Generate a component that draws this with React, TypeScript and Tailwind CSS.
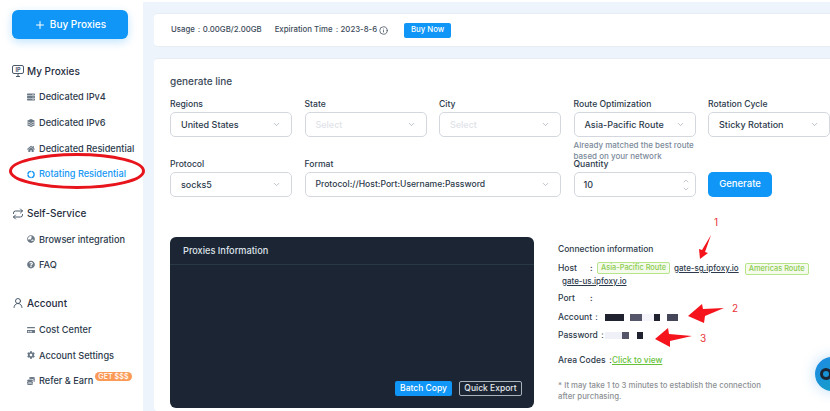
import { ChevronDown, ChevronUp, Plus, Info, Repeat, UserRound } from "lucide-react";
import { FaServer, FaLayerGroup, FaHome, FaGlobeAsia, FaQuestionCircle, FaCreditCard, FaCog, FaCoins } from "react-icons/fa";
import type { ReactNode } from "react";

const FONT = "font-['Inter','Liberation_Sans',sans-serif]";

function IpIcon() {
  return (
    <svg width="12" height="12" viewBox="0 0 12 12" fill="none" stroke="currentColor" strokeWidth="1">
      <rect x="0.5" y="0.5" width="11" height="8" rx="1.5" />
      <path d="M4 11.5h4M6 8.5v3" />
      <text x="6" y="6.6" textAnchor="middle" fontSize="5.5" fontWeight="700" fill="currentColor" stroke="none">IP</text>
    </svg>
  );
}

function RingIcon() {
  return (
    <svg width="9" height="9" viewBox="0 0 9 9" fill="none" stroke="currentColor" strokeWidth="1.5">
      <circle cx="4.5" cy="4.5" r="3.5" strokeDasharray="5 0.6" />
    </svg>
  );
}

function NavHead({ icon, label }: { icon: ReactNode; label: string }) {
  return (
    <div className="flex items-center gap-[3px] h-[14px] pl-[12px] text-[10px] font-medium text-[#1f2d3d]">
      <span className="w-[12px] flex justify-center text-[#4b5a6b]">{icon}</span>
      {label}
    </div>
  );
}

function NavItem({ icon, label, active, badge }: { icon: ReactNode; label: string; active?: boolean; badge?: boolean }) {
  return (
    <div className={`flex items-center gap-[4px] h-[14px] pt-[1px] pl-[27px] text-[9.2px] font-medium whitespace-nowrap ${active ? "text-[#1296f5]" : "text-[#2c3a4b]"}`}>
      <span className={`w-[8px] flex justify-center ${active ? "text-[#1296f5]" : "text-[#6b7886]"}`}>{icon}</span>
      {label}
      {badge && (
        <span className="-mt-[9px] -ml-[2px] h-[9px] px-[3px] rounded-full bg-[#fb9a57] text-white text-[7.2px] leading-[9px]">GET $$$</span>
      )}
    </div>
  );
}

function Field({ label, value, placeholder, wide, children }: { label: string; value?: string; placeholder?: boolean; wide?: boolean; children?: ReactNode }) {
  return (
    <div className={wide ? "col-span-2" : ""}>
      <div className="h-[12px] leading-[12px] text-[8.6px] font-medium text-[#2c3a4b]">{label}</div>
      {children ?? (
        <div className="mt-[2px] h-[25px] flex items-center justify-between pl-[10px] pr-[10px] bg-white border border-[#d4d8de] rounded-[5px]">
          <span className={`${wide ? "text-[8.6px]" : "text-[9px]"} font-medium whitespace-nowrap ${placeholder ? "text-[#dfe3e8]" : "text-[#2c3a4b]"}`}>{value}</span>
          <ChevronDown size={9} className="text-[#a8afb8]" />
        </div>
      )}
    </div>
  );
}

function Tag({ children }: { children: ReactNode }) {
  return (
    <span className="inline-block h-[12px] leading-[10px] px-[3px] border border-[#b7e58c] bg-[#f4fbec] rounded-[2px] text-[7.4px] font-medium text-[#8ccb50] whitespace-nowrap">{children}</span>
  );
}

function Redacted({ bars }: { bars: [number, string][] }) {
  return (
    <span className="flex items-center h-[7px] blur-[0.6px]">
      {bars.map(([w, c], i) => (
        <span key={i} className="h-full" style={{ width: w, background: c }} />
      ))}
    </span>
  );
}

export default function App() {
  return (
    <div className={`relative flex w-[830px] h-[411px] overflow-hidden bg-[#edf4fb] ${FONT}`}>
      {/* Sidebar */}
      <aside className="w-[143px] shrink-0 bg-white pt-[10px]">
        <div className="ml-[12px] mr-[15px] h-[29px] flex items-center justify-center gap-[4px] rounded-[6px] bg-[#0f96f6] text-white text-[10px] font-medium shadow-[0_3px_8px_rgba(15,150,246,0.25)]">
          <Plus size={12} />
          Buy Proxies
        </div>
        <div className="mt-[25px] flex flex-col gap-[11.7px]">
          <NavHead icon={<IpIcon />} label="My Proxies" />
          <NavItem icon={<FaServer size={8} />} label="Dedicated IPv4" />
          <NavItem icon={<FaLayerGroup size={8} />} label="Dedicated IPv6" />
          <NavItem icon={<FaHome size={8} />} label="Dedicated Residential" />
          <NavItem icon={<RingIcon />} label="Rotating Residential" active />
        </div>
        <div className="mt-[26px] flex flex-col gap-[11.2px]">
          <NavHead icon={<Repeat size={12} />} label="Self-Service" />
          <NavItem icon={<FaGlobeAsia size={8} />} label="Browser integration" />
          <NavItem icon={<FaQuestionCircle size={9} />} label="FAQ" />
        </div>
        <div className="mt-[25px] flex flex-col gap-[11.9px]">
          <NavHead icon={<UserRound size={12} />} label="Account" />
          <NavItem icon={<FaCreditCard size={8} />} label="Cost Center" />
          <NavItem icon={<FaCog size={8} />} label="Account Settings" />
          <NavItem icon={<FaCoins size={8} />} label="Refer & Earn" badge />
        </div>
      </aside>

      {/* Main */}
      <main className="flex-1 min-w-0 pl-[11px] pt-[11px] border-t-2 border-white flex flex-col gap-[11px]">
        <div className="h-[34px] shrink-0 flex items-center pl-[17px] bg-white rounded-l-[4px] border-y border-[#e6edf4] text-[7.8px] font-medium text-[#3c4a5a] whitespace-nowrap">
          <span>Usage：0.00GB/2.00GB</span>
          <span className="ml-[13px]">Expiration Time：2023-8-6</span>
          <Info size={9} className="ml-[2px]" />
          <span className="ml-[16px] w-[47px] h-[15px] flex items-center justify-center rounded-[2px] bg-[#0f96f6] text-white">Buy Now</span>
        </div>

        <div className="flex-1 pl-[16px] pt-[16px] bg-white rounded-l-[4px] border-t border-[#e6edf4]">
          <div className="h-[12px] leading-[12px] text-[10px] font-medium text-[#3c4a5a]">generate line</div>

          <div className="mt-[11px] grid grid-cols-[122px_122px_122px_122px_122px] gap-x-[12.5px] gap-y-[21px] w-[700px]">
            <Field label="Regions" value="United States" />
            <Field label="State" value="Select" placeholder />
            <Field label="City" value="Select" placeholder />
            <div className="relative">
              <Field label="Route Optimization" value="Asia-Pacific Route" />
              <div className="absolute left-0 top-[42px] text-[8px] leading-[10.5px] font-medium text-[#7b8a9a] whitespace-nowrap">
                Already matched the best route<br />based on your network
              </div>
            </div>
            <Field label="Rotation Cycle" value="Sticky Rotation" />

            <Field label="Protocol" value="socks5" />
            <Field label="Format" value="Protocol://Host:Port:Username:Password" wide />
            <Field label="Quantity">
              <div className="mt-[2px] h-[25px] flex items-center justify-between pl-[9px] pr-[5px] border border-[#d4d8de] rounded-[5px]">
                <span className="text-[9px] font-medium text-[#2c3a4b]">10</span>
                <span className="flex flex-col text-[#a8afb8]">
                  <ChevronUp size={8} />
                  <ChevronDown size={8} />
                </span>
              </div>
            </Field>
            <div className="pt-[14px]">
              <div className="w-[64px] h-[25px] flex items-center justify-center rounded-[5px] bg-[#0f96f6] text-white text-[9.5px] font-medium">Generate</div>
            </div>
          </div>

          <div className="mt-[40px] flex items-start">
            {/* Proxies panel */}
            <section className="w-[364px] h-[171px] shrink-0 flex flex-col rounded-[6px] bg-[#1b2533]">
              <div className="h-[28px] shrink-0 flex items-center pl-[13px] border-b border-[#2a3746] text-[9.2px] font-medium text-[#dfe4ea]">Proxies Information</div>
              <div className="flex-1 flex items-end justify-end gap-[7px] pr-[12px] pb-[12px] text-[8.5px] font-medium text-white">
                <span className="w-[57px] h-[15px] flex items-center justify-center rounded-[2px] bg-[#0f96f6]">Batch Copy</span>
                <span className="w-[63px] h-[15px] flex items-center justify-center rounded-[2px] border border-[#aab2bc] text-[#e4e8ec]">Quick Export</span>
              </div>
            </section>

            {/* Connection info */}
            <section className="ml-[24px] w-[272px] pt-[5px] text-[8.5px] font-medium text-[#2c3a4b] whitespace-nowrap">
              <div className="h-[12px] leading-[14px]">Connection information</div>
              <div className="mt-[8px] h-[12px] flex items-center">
                <span className="w-[32px] shrink-0">Host</span>
                <span className="w-[7px] shrink-0">:</span>
                <Tag>Asia-Pacific Route</Tag>
                <span className="ml-[4px] text-[8px] underline">gate-sg.ipfoxy.io</span>
                <span className="ml-[6px]"><Tag>Americas Route</Tag></span>
              </div>
              <div className="mt-[1px] h-[12px] leading-[12px] pl-[4px] text-[8px] underline">gate-us.ipfoxy.io</div>
              <div className="mt-[5px] h-[12px] flex items-center">
                <span className="w-[32px]">Port</span>
                <span>:</span>
              </div>
              <div className="mt-[7px] h-[12px] flex items-center">
                <span className="w-[47px] shrink-0">Account：</span>
                <Redacted bars={[[19, "#20222f"], [6, "#ffffff"], [12, "#55566a"], [12, "#f4f4fa"], [6, "#20222f"], [7, "#ffffff"], [11, "#45465a"]]} />
              </div>
              <div className="mt-[6px] h-[12px] flex items-center">
                <span className="w-[47px] shrink-0">Password：</span>
                <Redacted bars={[[17, "#f0f0f8"], [7, "#55566a"], [8, "#ffffff"], [6, "#20222f"], [2, "#ffffff"]]} />
              </div>
              <div className="mt-[13px] h-[12px] flex items-center">
                <span className="w-[54px] shrink-0">Area Codes：</span>
                <span className="text-[8.3px] text-[#67c23a] underline">Click to view</span>
              </div>
              <div className="mt-[14px] text-[7.8px] leading-[11px] text-[#8c8f94]">
                * It may take 1 to 3 minutes to establish the connection<br />after purchasing.
              </div>
            </section>
          </div>
        </div>
      </main>

      {/* Red annotations drawn over the screenshot */}
      <svg className="absolute left-0 top-0 pointer-events-none" width="830" height="411" viewBox="0 0 830 411" fill="none">
        <ellipse cx="77" cy="171" rx="66.5" ry="16.5" stroke="#e8141c" strokeWidth="3" />
        <path d="M711 235 L705 252 L708 253 L700 259 L699 249 L702 250 Z" fill="#f5141c" />
        <path d="M688 316 L702 304 L703 309 L724 308 L705 316 L704 323 Z" fill="#f5141c" />
        <path d="M655 339 L668 328 L669 334 L692 336 L670 341 L670 347 Z" fill="#f5141c" />
      </svg>
      <span className="absolute left-[714px] top-[215px] text-[10px] text-[#e8343a]">1</span>
      <span className="absolute left-[732px] top-[301px] text-[10px] text-[#e8343a]">2</span>
      <span className="absolute left-[700px] top-[331px] text-[10px] text-[#e8343a]">3</span>

      {/* Chat bubble */}
      <div className="absolute left-[815px] top-[357px] w-[34px] h-[34px] rounded-full bg-[linear-gradient(135deg,#1e88e5,#12a5c0)] shadow-[0_0_14px_rgba(30,136,229,0.3)] flex items-center pl-[5px]">
        <span className="w-[12px] h-[12px] rounded-full border-[3px] border-[#1b2533]" />
      </div>
    </div>
  );
}
